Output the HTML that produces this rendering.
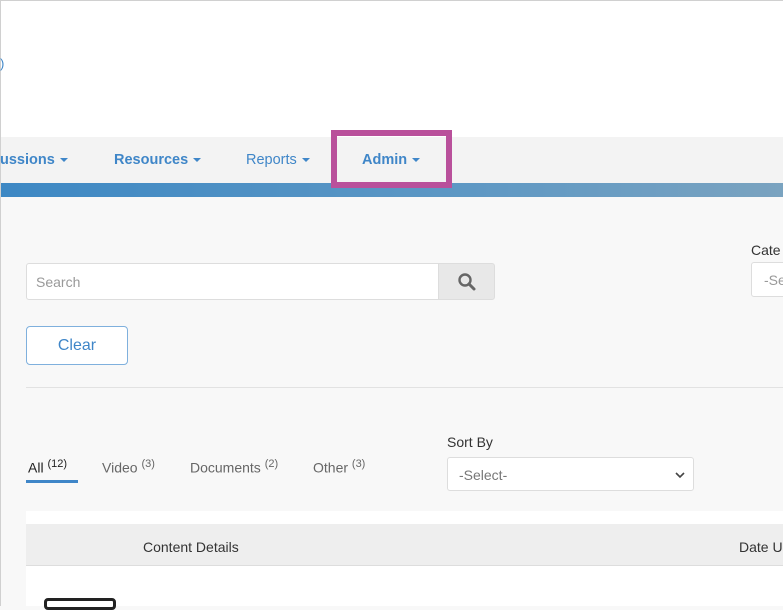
<!DOCTYPE html><html><head><style>
*{margin:0;padding:0;box-sizing:border-box}
body{width:783px;height:606px;overflow:hidden;background:#f8f8f8;font-family:"Liberation Sans",sans-serif;position:relative}
.a{position:absolute;white-space:nowrap}
.nav{color:#3f86c8;font-size:14.5px;font-weight:bold}
.car{display:inline-block;border-left:4px solid transparent;border-right:4px solid transparent;border-top:4px solid #3f86c8;vertical-align:middle;margin-left:5px}
</style></head><body>
<div class="a" style="left:0;top:0;width:783px;height:137px;background:#fff"></div>
<div class="a" style="left:0;top:137px;width:783px;height:46px;background:#f3f3f3"></div>
<div class="a" style="left:0;top:183px;width:783px;height:14px;background:linear-gradient(90deg,#3d88c4,#5e98c4 60%,#7aa3c0)"></div>
<div class="a" style="left:0;top:0;width:783px;height:606px;border:1px solid #d0d0d0;border-right:none;border-bottom:none"></div>
<div class="a" style="left:0;top:56px;color:#3f86c8;font-size:13px">)</div>
<div class="a nav" style="left:0;top:152px">ussions<span class="car"></span></div>
<div class="a nav" style="left:114px;top:152px">Resources<span class="car"></span></div>
<div class="a nav" style="left:246px;top:152px;font-weight:normal">Reports<span class="car"></span></div>
<div class="a" style="left:331px;top:130px;width:121px;height:58px;border:6px solid #b9509b"></div>
<div class="a nav" style="left:362px;top:152px">Admin<span class="car"></span></div>
<div class="a" style="left:26px;top:263px;width:413px;height:37px;background:#fff;border:1px solid #ddd;border-radius:3px 0 0 3px;color:#999;font-size:14px;padding:10px 9px">Search</div>
<div class="a" style="left:438px;top:263px;width:57px;height:37px;background:#e8e8e8;border:1px solid #ddd;border-radius:0 3px 3px 0">
<svg width="20" height="20" viewBox="0 0 20 20" style="position:absolute;left:18px;top:8px"><circle cx="8" cy="8" r="5.5" fill="none" stroke="#666" stroke-width="2.4"/><path d="M12 12l5 5" stroke="#666" stroke-width="3" stroke-linecap="round"/></svg></div>
<div class="a" style="left:751px;top:242px;font-size:14px;color:#333">Cate</div>
<div class="a" style="left:751px;top:262px;width:40px;height:35px;background:#fff;border:1px solid #ddd;border-radius:3px;color:#999;font-size:14px;padding:9px 12px;overflow:hidden">-Se</div>
<div class="a" style="left:26px;top:326px;width:102px;height:39px;background:#fff;border:1.5px solid #7fb0dd;border-radius:4px;color:#3f86c8;font-size:16px;text-align:center;line-height:38px">Clear</div>
<div class="a" style="left:26px;top:387px;width:757px;height:1px;background:#e2e2e2"></div>
<div class="a" style="left:28px;top:458px;font-size:14px;color:#222">All <sup style="font-size:11px">(12)</sup></div>
<div class="a" style="left:26px;top:480px;width:52px;height:3px;background:#3f86c8"></div>
<div class="a" style="left:102px;top:458px;font-size:14px;color:#666">Video <sup style="font-size:11px">(3)</sup></div>
<div class="a" style="left:190px;top:458px;font-size:14px;color:#666">Documents <sup style="font-size:11px">(2)</sup></div>
<div class="a" style="left:313px;top:458px;font-size:14px;color:#666">Other <sup style="font-size:11px">(3)</sup></div>
<div class="a" style="left:447px;top:434px;font-size:14px;color:#333">Sort By</div>
<div class="a" style="left:447px;top:457px;width:247px;height:34px;background:#fff;border:1px solid #ddd;border-radius:3px;color:#777;font-size:14px;padding:9px 11px">-Select-<svg width="10" height="8" viewBox="0 0 10 8" style="position:absolute;right:8px;top:13px"><path d="M1 2l4 4 4-4" fill="none" stroke="#444" stroke-width="1.6"/></svg></div>
<div class="a" style="left:26px;top:511px;width:757px;height:95px;background:#fff"></div>
<div class="a" style="left:26px;top:524px;width:757px;height:42px;background:#eeeeee;border-bottom:1px solid #ddd"></div>
<div class="a" style="left:143px;top:539px;font-size:14px;color:#333">Content Details</div>
<div class="a" style="left:739px;top:539px;font-size:14px;color:#333">Date U</div>
<div class="a" style="left:44px;top:598px;width:72px;height:12px;border:3px solid #222;border-radius:4px;background:#fff"></div>
</body></html>
